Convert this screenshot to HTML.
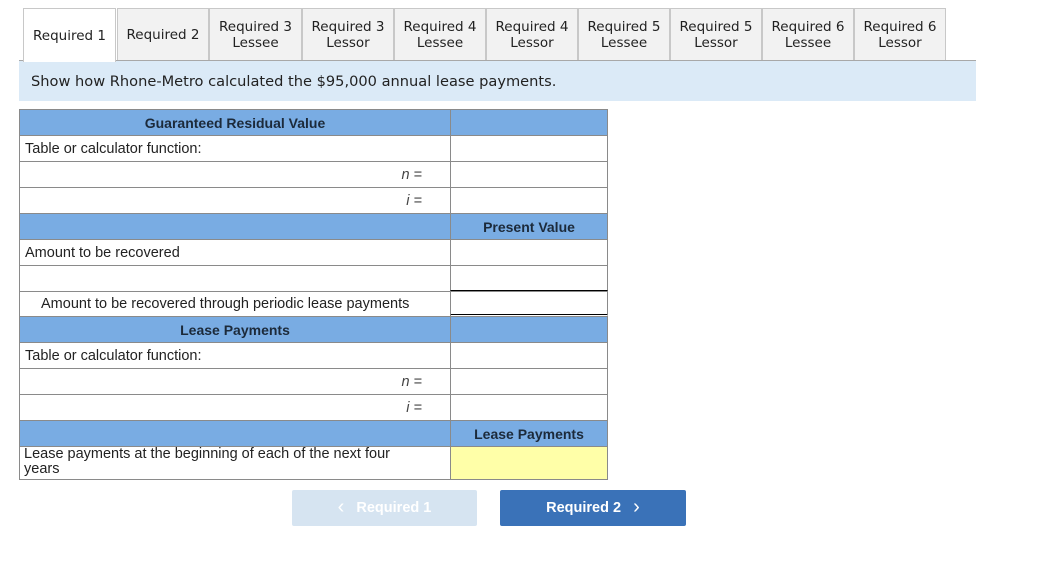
<!DOCTYPE html>
<html><head><meta charset="utf-8"><style>
*{margin:0;padding:0;box-sizing:border-box}
body{width:1050px;height:581px;background:#fff;position:relative;overflow:hidden;font-family:"Liberation Sans",Arial,sans-serif;color:#222}
.tab{position:absolute;top:8px;height:53px;background:#f2f2f2;border:1px solid #c8c8c8;border-bottom:none;font-family:"DejaVu Sans",Verdana,sans-serif;font-size:13.5px;color:#222;text-align:center;display:flex;align-items:center;justify-content:center;line-height:16px}
.tab.act{background:#fff;height:54px;z-index:2}
.line{position:absolute;left:19px;top:60px;width:957px;height:1px;background:#a8a8a8}
.banner{position:absolute;left:19px;top:61px;width:957px;height:40px;background:#dbeaf7;font-family:"DejaVu Sans",Verdana,sans-serif;font-size:14.6px;padding:12px 0 0 12px;color:#222}
.c{position:absolute;border:1px solid #8a8a8a;font-size:14.5px;display:flex;align-items:center}
.h{background:#79ace3;font-weight:bold;color:#1c2a3a;justify-content:center;font-size:14px}
.btn{position:absolute;top:490px;height:36px;font-size:14.5px;font-weight:bold;color:#fff;display:flex;align-items:center;justify-content:center;border-radius:2px}
.btn b{font-size:20px;font-weight:normal;position:relative;top:-1px}
</style></head><body>
<div class="tab act" style="left:23px;width:93px">Required 1</div>
<div class="tab" style="left:117px;width:92px">Required 2</div>
<div class="tab" style="left:209px;width:93px">Required 3<br>Lessee</div>
<div class="tab" style="left:302px;width:92px">Required 3<br>Lessor</div>
<div class="tab" style="left:394px;width:92px">Required 4<br>Lessee</div>
<div class="tab" style="left:486px;width:92px">Required 4<br>Lessor</div>
<div class="tab" style="left:578px;width:92px">Required 5<br>Lessee</div>
<div class="tab" style="left:670px;width:92px">Required 5<br>Lessor</div>
<div class="tab" style="left:762px;width:92px">Required 6<br>Lessee</div>
<div class="tab" style="left:854px;width:92px">Required 6<br>Lessor</div>
<div class="line"></div>
<div class="banner">Show how Rhone-Metro calculated the $95,000 annual lease payments.</div>

<div class="c h" style="left:19px;top:109px;width:432px;height:27px">Guaranteed Residual Value</div>
<div class="c h" style="left:450px;top:109px;width:158px;height:27px"></div>
<div class="c" style="left:19px;top:135px;width:432px;height:27px;padding-left:5px">Table or calculator function:</div>
<div class="c" style="left:450px;top:135px;width:158px;height:27px"></div>
<div class="c" style="left:19px;top:161px;width:432px;height:27px;justify-content:flex-end;padding-right:28px;font-style:italic;color:#444">n =</div>
<div class="c" style="left:450px;top:161px;width:158px;height:27px"></div>
<div class="c" style="left:19px;top:187px;width:432px;height:27px;justify-content:flex-end;padding-right:28px;font-style:italic;color:#444">i =</div>
<div class="c" style="left:450px;top:187px;width:158px;height:27px"></div>
<div class="c h" style="left:19px;top:213px;width:432px;height:27px"></div>
<div class="c h" style="left:450px;top:213px;width:158px;height:27px">Present Value</div>
<div class="c" style="left:19px;top:239px;width:432px;height:27px;padding-left:5px">Amount to be recovered</div>
<div class="c" style="left:450px;top:239px;width:158px;height:27px"></div>
<div class="c" style="left:19px;top:265px;width:432px;height:27px"></div>
<div class="c" style="left:450px;top:265px;width:158px;height:27px"></div>
<div class="c" style="left:19px;top:291px;width:432px;height:26px;padding-left:21px">Amount to be recovered through periodic lease payments</div>
<div class="c" style="left:450px;top:290px;width:158px;height:27px;border-top:1px solid #000;border-bottom:3px double #000"></div>
<div class="c h" style="left:19px;top:316px;width:432px;height:27px">Lease Payments</div>
<div class="c h" style="left:450px;top:316px;width:158px;height:27px"></div>
<div class="c" style="left:19px;top:342px;width:432px;height:27px;padding-left:5px">Table or calculator function:</div>
<div class="c" style="left:450px;top:342px;width:158px;height:27px"></div>
<div class="c" style="left:19px;top:368px;width:432px;height:27px;justify-content:flex-end;padding-right:28px;font-style:italic;color:#444">n =</div>
<div class="c" style="left:450px;top:368px;width:158px;height:27px"></div>
<div class="c" style="left:19px;top:394px;width:432px;height:27px;justify-content:flex-end;padding-right:28px;font-style:italic;color:#444">i =</div>
<div class="c" style="left:450px;top:394px;width:158px;height:27px"></div>
<div class="c h" style="left:19px;top:420px;width:432px;height:27px"></div>
<div class="c h" style="left:450px;top:420px;width:158px;height:27px">Lease Payments</div>
<div class="c" style="left:19px;top:446px;width:432px;height:34px;padding-left:4px;line-height:15px;align-items:flex-start;padding-top:0">Lease payments at the beginning of each of the next four<br>years</div>
<div class="c" style="left:450px;top:446px;width:158px;height:34px;background:#ffffa8"></div>

<div class="btn" style="left:292px;width:185px;background:#d6e4f1;color:#fff"><b>&#x2039;</b>&nbsp;&nbsp; Required 1</div>
<div class="btn" style="left:500px;width:186px;background:#3a72b8">Required 2 &nbsp;&nbsp;<b>&#x203A;</b></div>
</body></html>
